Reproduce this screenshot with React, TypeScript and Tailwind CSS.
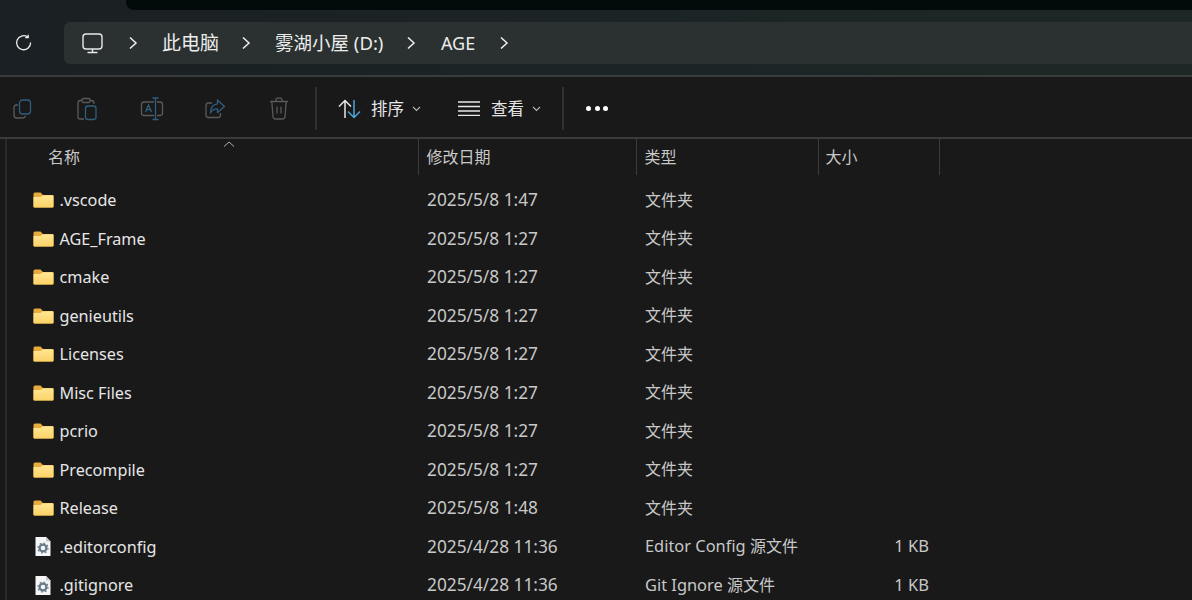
const sans = "font-['Noto_Sans','Noto_Sans_CJK_SC',sans-serif]";

type Row = { name: string; date: string; type: string; cjk: string; size?: string; file?: boolean };

const rows: Row[] = [
  { name: ".vscode", date: "2025/5/8 1:47", type: "", cjk: "文件夹" },
  { name: "AGE_Frame", date: "2025/5/8 1:27", type: "", cjk: "文件夹" },
  { name: "cmake", date: "2025/5/8 1:27", type: "", cjk: "文件夹" },
  { name: "genieutils", date: "2025/5/8 1:27", type: "", cjk: "文件夹" },
  { name: "Licenses", date: "2025/5/8 1:27", type: "", cjk: "文件夹" },
  { name: "Misc Files", date: "2025/5/8 1:27", type: "", cjk: "文件夹" },
  { name: "pcrio", date: "2025/5/8 1:27", type: "", cjk: "文件夹" },
  { name: "Precompile", date: "2025/5/8 1:27", type: "", cjk: "文件夹" },
  { name: "Release", date: "2025/5/8 1:48", type: "", cjk: "文件夹" },
  { name: ".editorconfig", date: "2025/4/28 11:36", type: "Editor Config ", cjk: "源文件", size: "1 KB", file: true },
  { name: ".gitignore", date: "2025/4/28 11:36", type: "Git Ignore ", cjk: "源文件", size: "1 KB", file: true },
];

function Chevron() {
  return (
    <svg width="10" height="14" viewBox="0 0 10 14" fill="none" stroke="#f0f0f0" strokeWidth="1.5" className="shrink-0">
      <path d="M2 1.5 L8 7 L2 12.5" />
    </svg>
  );
}

function Folder() {
  return (
    <svg width="21" height="16" viewBox="0 0 21 16" className="shrink-0">
      <defs>
        <linearGradient id="folderFace" x1="0" y1="0" x2="0" y2="1">
          <stop offset="0" stopColor="#ffe695" />
          <stop offset="1" stopColor="#fcd266" />
        </linearGradient>
      </defs>
      <path d="M0.5 2 Q0.5 0.5 2 0.5 H7.5 L10 3 H19.5 Q20.5 3 20.5 4 V14.5 Q20.5 15.5 19.5 15.5 H1.5 Q0.5 15.5 0.5 14.5 Z" fill="#e8ac3e" />
      <path d="M0.5 5 L7.5 5 L10 3.2 H19.5 Q20.5 3.2 20.5 4.2 V14.5 Q20.5 15.5 19.5 15.5 H1.5 Q0.5 15.5 0.5 14.5 Z" fill="url(#folderFace)" />
    </svg>
  );
}

function FileGear() {
  return (
    <svg width="21" height="21" viewBox="0 0 21 21" className="shrink-0">
      <path d="M2.5 1.5 Q2.5 1 3 1 H13 L17.5 5.5 V19.5 Q17.5 20 17 20 H3 Q2.5 20 2.5 19.5 Z" fill="#f4f6f7" />
      <path d="M13 1 V5.5 H17.5 Z" fill="#c4c8ca" />
      <circle cx="10" cy="12" r="3.4" fill="none" stroke="#667a86" strokeWidth="2.2" />
      <circle cx="10" cy="12" r="5" fill="none" stroke="#667a86" strokeWidth="1.2" strokeDasharray="1.8 2.1" />
    </svg>
  );
}

const grey = "#5a5a5a";
const blue = "#2f5f7d";

function CopyIcon() {
  return (
    <svg width="22" height="22" viewBox="0 0 22 22" fill="none" strokeWidth="1.3">
      <path d="M6 7 H4.5 Q2 7 2 9.5 V17 Q2 20 5 20 H10 Q13 20 13.5 18" stroke={grey} />
      <rect x="7.5" y="2" width="11" height="14" rx="3" stroke={blue} />
    </svg>
  );
}

function PasteIcon() {
  return (
    <svg width="22" height="24" viewBox="0 0 22 24" fill="none" strokeWidth="1.3">
      <path d="M8 22 H4 Q2 22 2 20 V6 Q2 3.5 4.5 3.5 H6 M14 3.5 H15 Q18 3.5 18 6 V7" stroke={grey} />
      <rect x="6" y="1.5" width="8" height="4" rx="1.5" stroke={grey} />
      <rect x="9.5" y="9" width="10.5" height="13.5" rx="2.5" stroke={blue} />
    </svg>
  );
}

function RenameIcon() {
  return (
    <svg width="24" height="24" viewBox="0 0 24 24" fill="none" strokeWidth="1.3">
      <path d="M14 5 H4 Q1.5 5 1.5 7.5 V16 Q1.5 18.5 4 18.5 H14 M17 5 H20 Q22.5 5 22.5 7.5 V16 Q22.5 18.5 20 18.5 H17" stroke={grey} />
      <path d="M12.5 1 H18.5 M15.5 1 V22.5 M12.5 22.5 H18.5" stroke={blue} />
      <path d="M5.5 15 L8.5 8 L11.5 15 M6.6 12.6 H10.4" stroke={blue} />
    </svg>
  );
}

function ShareIcon() {
  return (
    <svg width="22" height="22" viewBox="0 0 22 22" fill="none" strokeWidth="1.3">
      <path d="M8 5 H4.5 Q2 5 2 7.5 V17 Q2 19.5 4.5 19.5 H14 Q16.5 19.5 16.5 17 V15" stroke={grey} />
      <path d="M13.5 2 L20.5 8.5 L13.5 14.5 V11 Q9 10.5 6.5 15 Q6.5 6.5 13.5 5.8 Z" stroke={blue} strokeLinejoin="round" />
    </svg>
  );
}

function TrashIcon() {
  return (
    <svg width="20" height="23" viewBox="0 0 20 23" fill="none" stroke={grey} strokeWidth="1.3">
      <path d="M1 4.5 H19 M7 4.5 V3 Q7 1.2 8.5 1.2 H11.5 Q13 1.2 13 3 V4.5" />
      <path d="M2.8 4.5 L4 19.5 Q4.2 22 6.5 22 H13.5 Q15.8 22 16 19.5 L17.2 4.5" />
      <path d="M8 9.5 V16.5 M12 9.5 V16.5" />
    </svg>
  );
}

function Caret() {
  return (
    <svg width="9" height="6" viewBox="0 0 9 6" fill="none" stroke="#b5b5b5" strokeWidth="1.1" className="shrink-0">
      <path d="M1 1 L4.5 4.5 L8 1" />
    </svg>
  );
}

function Divider() {
  return <div className="h-[43px] w-0.5 shrink-0 bg-[#303030]" />;
}

export default function App() {
  return (
    <div className={`${sans} flex h-[600px] w-[1192px] flex-col overflow-hidden bg-[#191919] text-[#e6e6e6]`}>
      {/* Title strip and address row */}
      <div className="h-[75px] shrink-0 bg-gradient-to-r from-[#1a2023] to-[#1d2826]">
        <div className="ml-[126px] h-2.5 rounded-bl-lg bg-[#020a0a]" />
        <div className="mt-3 flex h-[42px] items-center">
          <div className="flex w-[46px] shrink-0 justify-center pl-0.5">
            <svg width="18" height="18" viewBox="0 0 18 18" fill="none" stroke="#ececec" strokeWidth="1.3">
              <path d="M15.6 8.5 A7 7 0 1 1 12.6 3 M13.2 0.8 V3.6 H10.2" />
            </svg>
          </div>
          <div className="ml-[18px] flex h-[42px] flex-1 items-center rounded-l-md bg-[#2a3130] pl-[18px] text-[18.5px] text-[#ececec]">
            <svg width="21" height="21" viewBox="0 0 21 21" fill="none" stroke="#e8e8e8" strokeWidth="1.4" className="shrink-0">
              <rect x="1" y="1" width="19" height="15" rx="3" />
              <path d="M10.5 16 V19.5 M5.5 19.5 H15.5" />
            </svg>
            <div className="ml-[25px]"><Chevron /></div>
            <span className="ml-6 text-[19px]">此电脑</span>
            <div className="ml-[22px]"><Chevron /></div>
            <span className="ml-6">雾湖小屋 (D:)</span>
            <div className="ml-[22.5px]"><Chevron /></div>
            <span className="ml-[25px] text-[18px]">AGE</span>
            <div className="ml-6"><Chevron /></div>
          </div>
        </div>
      </div>

      {/* Toolbar */}
      <div className="flex h-[64px] shrink-0 items-center border-y-2 border-[#3a3c3c] bg-[#191919] pl-3 pt-[3px]">
        <div className="flex w-[303px] items-center">
          <div className="w-[64px]"><CopyIcon /></div>
          <div className="w-[64px]"><PasteIcon /></div>
          <div className="w-[64px]"><RenameIcon /></div>
          <div className="w-[65px]"><ShareIcon /></div>
          <div className="w-[40px]"><TrashIcon /></div>
        </div>
        <Divider />
        <div className="ml-[21px] flex items-center text-[16.5px]">
          <svg width="23" height="20" viewBox="0 0 23 20" fill="none" strokeWidth="1.5" className="shrink-0">
            <path d="M7 19 V1.5 M1 7.5 L7 1.5 L13 7.5" stroke="#e8e8e8" />
            <path d="M16 1 V18.5 M10 12.5 L16 18.5 L22 12.5" stroke="#4ca7de" />
          </svg>
          <span className="ml-[10px] pt-0.5">排序</span>
          <div className="ml-2"><Caret /></div>
        </div>
        <div className="ml-[37px] flex items-center text-[16.5px]">
          <svg width="22" height="15" viewBox="0 0 22 15" fill="none" stroke="#e8e8e8" strokeWidth="1.3" className="shrink-0">
            <path d="M0 1 H22 M0 5.5 H22 M0 10 H22 M0 14.5 H22" />
          </svg>
          <span className="ml-[11px] pt-0.5">查看</span>
          <div className="ml-2"><Caret /></div>
        </div>
        <div className="ml-[21px]"><Divider /></div>
        <div className="ml-[22px] flex gap-[3.5px]">
          <div className="size-[5px] rounded-full bg-white" />
          <div className="size-[5px] rounded-full bg-white" />
          <div className="size-[5px] rounded-full bg-white" />
        </div>
      </div>

      {/* File list */}
      <div className="relative ml-[5px] flex-1 border-l-2 border-[#2a2a2a]">
        <div className="flex h-[36px] text-[16px] text-[#c8c8c8]">
          <div className="relative flex w-[411px] items-center pl-[41px]">
            名称
            <svg width="12" height="6" viewBox="0 0 12 6" fill="none" stroke="#b0b0b0" strokeWidth="1" className="absolute left-[216px] top-0.5">
              <path d="M1 5.5 L6 1 L11 5.5" />
            </svg>
          </div>
          <div className="flex w-[218px] items-center border-l-[1.5px] border-[#3c3c3c] pl-[7.5px]">修改日期</div>
          <div className="flex w-[182px] items-center border-l-[1.5px] border-[#3c3c3c] pl-[7.5px]">类型</div>
          <div className="flex w-[122px] items-center border-x-[1.5px] border-[#3c3c3c] pl-[6.5px]">大小</div>
        </div>
        <div className="mt-[6px] flex flex-col">
          {rows.map((r) => (
            <div key={r.name} className="flex h-[38.5px] items-center text-[#e6e6e6]">
              <div className="flex w-[411px] items-center pl-[26px] text-[16.2px]">
                <div className="flex w-[27px] justify-start">{r.file ? <FileGear /> : <Folder />}</div>
                <span className="-ml-[0.5px]">{r.name}</span>
              </div>
              <div className="w-[218px] pl-[9px] text-[17.3px] text-[#c8c8c8]">{r.date}</div>
              <div className="w-[182px] pl-[9px] text-[16.4px] text-[#c8c8c8]">
                {r.type}
                <span className="text-[16px]">{r.cjk}</span>
              </div>
              <div className="w-[111px] text-right text-[16.5px] text-[#c8c8c8]">{r.size}</div>
            </div>
          ))}
        </div>
      </div>
    </div>
  );
}
